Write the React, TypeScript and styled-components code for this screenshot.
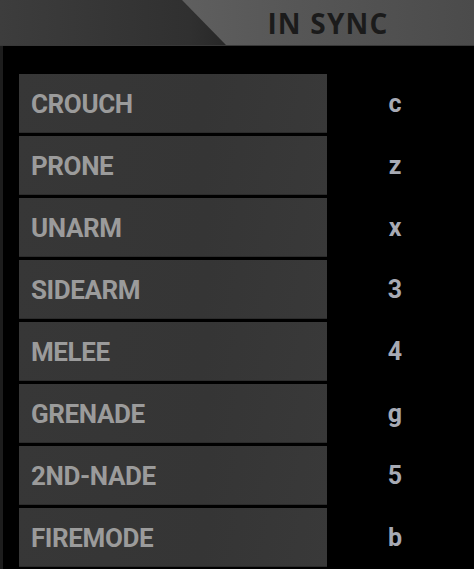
import React from "react";
import styled, { createGlobalStyle } from "styled-components";

const Global = createGlobalStyle`
  html, body { margin: 0; padding: 0; background: #000; }
  body { width: 474px; height: 569px; overflow: hidden; font-family: Roboto, "Liberation Sans", sans-serif; }
`;

const Frame = styled.div`
  width: 474px;
  height: 569px;
  display: flex;
  flex-direction: column;
  background: #000;
  overflow: hidden;
`;

const Header = styled.header`
  height: 45px;
  flex: none;
  display: flex;
  background: linear-gradient(to right, #3d3d3d 0%, #303030 40%, #272727 48%);
  border-bottom: 1px solid #383838;
`;

const Tab = styled.div`
  margin-left: 182px;
  flex: 1;
  display: flex;
  align-items: center;
  justify-content: center;
  background: linear-gradient(to right, #5f5f5f 0%, #565656 40%, #4b4b4b 100%);
  clip-path: polygon(0 0, 100% 0, 100% 100%, 44px 100%);
`;

const Title = styled.h1`
  margin: 0;
  font-family: "Open Sans", Roboto, sans-serif;
  font-weight: 700;
  font-size: 28px;
  letter-spacing: 1.2px;
  color: #1b1b1b;
  line-height: 1;
`;

const Body = styled.div`
  flex: 1;
  display: flex;
  border-left: 3px solid #1d1d1d;
  padding: 28px 0 0 16px;
`;

const List = styled.ul`
  list-style: none;
  margin: 0;
  padding: 0;
  display: grid;
  grid-template-columns: 308px 136px;
  grid-auto-rows: 59px;
  row-gap: 3px;
`;

const Label = styled.li`
  display: flex;
  align-items: center;
  padding-left: 12px;
  background: linear-gradient(100deg, #373737 0%, #353535 60%, #393939 100%);
  box-shadow: inset 0 -1px 0 #2c2c2c;
  color: #9b9b9b;
  font-family: Roboto, "Liberation Sans", sans-serif;
  font-weight: 700;
  font-size: 26px;
  letter-spacing: -0.4px;
`;

const Key = styled.li`
  display: flex;
  align-items: center;
  justify-content: center;
  color: #a7aab4;
  font-family: Roboto, "Liberation Sans", sans-serif;
  font-weight: 700;
  font-size: 25px;
`;

const binds: [string, string][] = [
  ["CROUCH", "c"],
  ["PRONE", "z"],
  ["UNARM", "x"],
  ["SIDEARM", "3"],
  ["MELEE", "4"],
  ["GRENADE", "g"],
  ["2ND-NADE", "5"],
  ["FIREMODE", "b"],
];

export default function App() {
  return (
    <Frame>
      <Global />
      <Header>
        <Tab>
          <Title>IN SYNC</Title>
        </Tab>
      </Header>
      <Body>
        <List>
          {binds.map(([label, key]) => (
            <React.Fragment key={label}>
              <Label>{label}</Label>
              <Key>{key}</Key>
            </React.Fragment>
          ))}
        </List>
      </Body>
    </Frame>
  );
}
